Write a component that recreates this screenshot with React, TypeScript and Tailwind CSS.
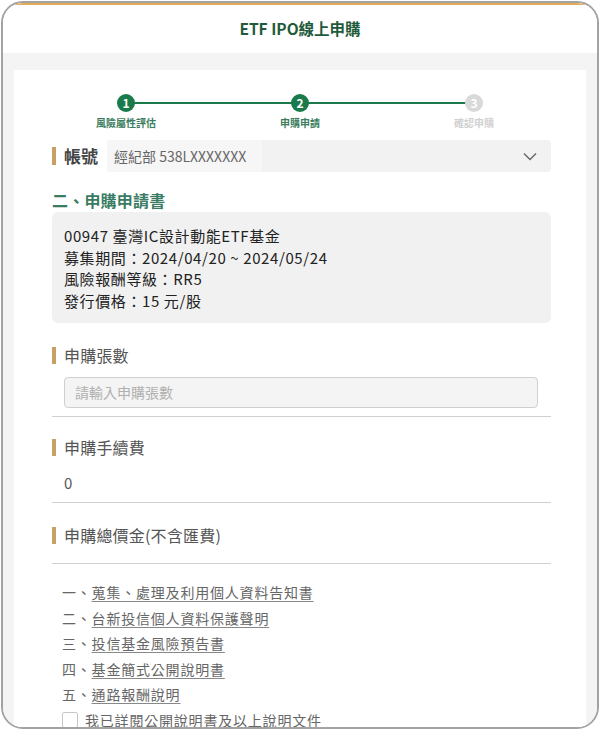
import React from "react";

const font = { fontFamily: '"Noto Sans CJK TC", "Noto Sans", sans-serif' };

function Step({ n, label, active }: { n: number; label: string; active: boolean }) {
  return (
    <div className="relative z-10 flex w-[80px] flex-col items-center">
      <div
        className={
          "flex h-[18px] w-[18px] items-center justify-center rounded-full text-[12px] font-bold leading-none text-white " +
          (active ? "bg-[#1b7a4b]" : "bg-[#d9d9d9]")
        }
      >
        {n}
      </div>
      <div
        className={
          "mt-[5px] text-[10px] font-bold leading-[12px] " +
          (active ? "text-[#3b7d5e]" : "text-[#d2d2d2]")
        }
      >
        {label}
      </div>
    </div>
  );
}

function FieldLabel({ children }: { children: React.ReactNode }) {
  return (
    <div className="flex h-[22px] items-center">
      <div className="h-[17px] w-[4px] bg-[#c9a064]" />
      <div className="ml-[8px] text-[16px] leading-[22px] tracking-[0.2px] text-[#555]">{children}</div>
    </div>
  );
}

function LinkItem({ prefix, text }: { prefix: string; text: string }) {
  return (
    <div className="flex h-[25.5px] items-center pl-[10px] text-[14px] tracking-[0.8px] text-[#666]">
      <span>{prefix}</span>
      <span className="underline decoration-[#888] underline-offset-[3px]">{text}</span>
    </div>
  );
}

export default function App() {
  return (
    <div className="h-[730px] w-[600px] bg-white p-[1px]" style={font}>
      <div className="flex h-full flex-col overflow-hidden rounded-[22px] border-2 border-[#a3a3a3] bg-white">
        <div className="flex h-[50px] shrink-0 items-center justify-center border-t-2 border-[#e3ab58] bg-white">
          <span className="text-[15.5px] font-bold text-[#1f5b3b]">ETF IPO線上申購</span>
        </div>
        <div className="flex flex-1 flex-col bg-[#f4f4f4] px-[11px] pt-[17px]">
          <div className="flex-1 overflow-hidden bg-white pl-[38px] pr-[35px] pt-[24px]">
            {/* stepper */}
            <div className="relative flex justify-between pl-[34px] pr-[37px]">
              <div className="absolute left-[74px] right-[77px] top-[8px] h-[2px] bg-[#1b7a4b]" />
              <Step n={1} label="風險屬性評估" active />
              <Step n={2} label="申購申請" active />
              <Step n={3} label="確認申購" active={false} />
            </div>

            {/* account */}
            <div className="mt-[11px] flex h-[32px] items-center">
              <div className="h-[18px] w-[4px] bg-[#c9a064]" />
              <div className="ml-[8px] w-[43px] text-[17px] font-bold text-[#444]">帳號</div>
              <div className="flex h-[32px] flex-1 items-center justify-between rounded-[4px] bg-[#f2f2f2] pr-[14px]">
                <span className="flex h-[32px] w-[155px] items-center bg-[#f6f6f6] pl-[7px] text-[14px] text-[#666]">
                  經紀部 538LXXXXXXX
                </span>
                <svg width="14" height="9" viewBox="0 0 14 9" fill="none">
                  <polyline points="1,1.5 7,7.5 13,1.5" stroke="#666" strokeWidth="1.4" />
                </svg>
              </div>
            </div>

            {/* section heading */}
            <div className="mt-[16px] h-[24px] text-[16px] font-bold leading-[24px] tracking-[0.2px] text-[#3a7c62]">
              二、申購申請書
            </div>
            <div className="rounded-[6px] bg-[#f1f1f1] pb-[12px] pl-[12px] pt-[13px] text-[15px] leading-[21.5px] tracking-[0.6px] text-[#222]">
              <div>00947 臺灣IC設計動能ETF基金</div>
              <div>募集期間：2024/04/20 ~ 2024/05/24</div>
              <div>風險報酬等級：RR5</div>
              <div>發行價格：15 元/股</div>
            </div>

            {/* quantity */}
            <div className="mt-[21px]">
              <FieldLabel>申購張數</FieldLabel>
            </div>
            <div className="mt-[11px] pl-[12px] pr-[13px]">
              <div className="flex h-[31px] items-center rounded-[4px] border border-[#cfcfcf] bg-[#f4f4f4] pl-[10px] text-[14px] text-[#b0b0b0]">
                請輸入申購張數
              </div>
            </div>
            <div className="mt-[8px] border-t border-[#d0d0d0]" />

            {/* fee */}
            <div className="mt-[19px]">
              <FieldLabel>申購手續費</FieldLabel>
            </div>
            <div className="mt-[14px] h-[22px] pl-[12px] text-[15px] leading-[22px] text-[#555]">0</div>
            <div className="mt-[8px] border-t border-[#d0d0d0]" />

            {/* total */}
            <div className="mt-[21px]">
              <FieldLabel>申購總價金(不含匯費)</FieldLabel>
            </div>
            <div className="mt-[17px] border-t border-[#d0d0d0]" />

            {/* links */}
            <div className="mt-[16px]">
              <LinkItem prefix="一、" text="蒐集、處理及利用個人資料告知書" />
              <LinkItem prefix="二、" text="台新投信個人資料保護聲明" />
              <LinkItem prefix="三、" text="投信基金風險預告書" />
              <LinkItem prefix="四、" text="基金簡式公開說明書" />
              <LinkItem prefix="五、" text="通路報酬說明" />
            </div>
            <div className="mt-[3px] flex items-center pl-[10px]">
              <div className="h-[16px] w-[16px] rounded-[2px] border border-[#c8c8c8] bg-white" />
              <span className="ml-[7px] text-[14px] leading-[18px] tracking-[0.8px] text-[#666]">我已詳閱公開說明書及以上說明文件</span>
            </div>
          </div>
        </div>
      </div>
    </div>
  );
}
